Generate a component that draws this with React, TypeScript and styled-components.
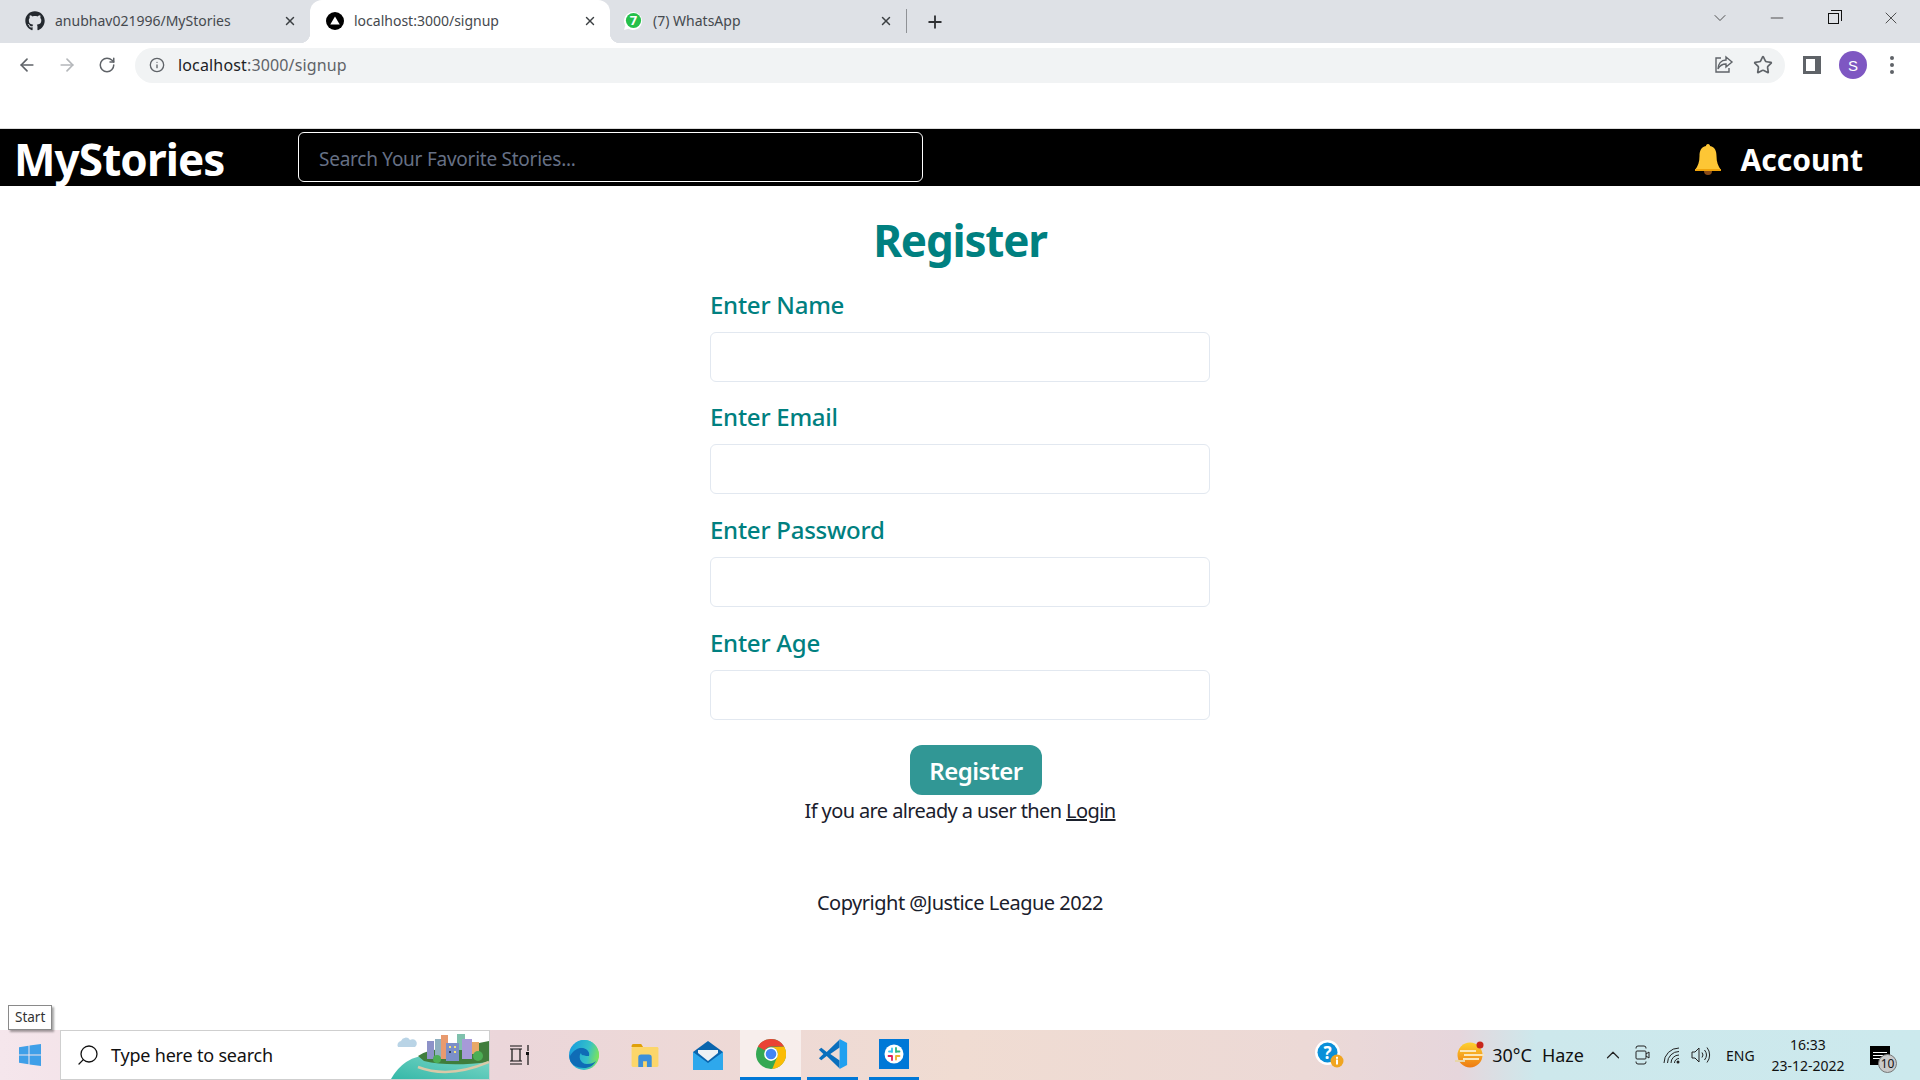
import React from "react";
import styled, { createGlobalStyle } from "styled-components";
import { ArrowLeft, ArrowRight, RotateCw, Info, Star, ChevronDown, ChevronUp, Minus, X, Plus, Search } from "lucide-react";
import { FaGithub } from "react-icons/fa";

const GlobalStyle = createGlobalStyle`
  * { box-sizing: border-box; }
  body {
    margin: 0;
    background: #fff;
    font-family: "Noto Sans", "Open Sans", sans-serif;
    color: #1a202c;
  }
`;

const Screen = styled.div`
  position: relative;
  display: flex;
  flex-direction: column;
  width: 1920px;
  height: 1080px;
  overflow: hidden;
`;

const TabStrip = styled.div`
  display: flex;
  align-items: stretch;
  height: 43px;
  padding-left: 12px;
  background: #dee1e6;
`;

const Tab = styled.div<{ $active?: boolean; $width: number }>`
  position: relative;
  display: flex;
  align-items: center;
  width: ${(p) => p.$width}px;
  padding: 0 13px 2px ${(p) => (p.$active ? 16 : 13)}px;
  font-size: 14px;
  color: #45494e;
  background: ${(p) => (p.$active ? "#fff" : "transparent")};
  border-radius: 12px 12px 0 0;
  ${(p) =>
    p.$active &&
    `
    &::before, &::after {
      content: "";
      position: absolute;
      bottom: 0;
      width: 10px;
      height: 10px;
    }
    &::before {
      left: -10px;
      background: radial-gradient(circle at 0 0, transparent 10px, #fff 10.5px);
    }
    &::after {
      right: -10px;
      background: radial-gradient(circle at 100% 0, transparent 10px, #fff 10.5px);
    }
  `}
`;

const TabTitle = styled.span`
  flex: 1;
  margin-left: 10px;
  white-space: nowrap;
`;

const TabDivider = styled.div`
  width: 1px;
  height: 24px;
  margin: 9px 18px 0 0;
  background: #8f9296;
`;

const NewTab = styled.div`
  display: flex;
  align-items: center;
  color: #2f3134;
`;

const WindowControls = styled.div`
  display: flex;
  align-items: flex-start;
  margin-left: auto;
  padding: 8px 1px 0 0;
  color: #333;
`;

const WindowButton = styled.div<{ $width: number }>`
  display: flex;
  justify-content: center;
  width: ${(p) => p.$width}px;
`;

const RestoreIcon = styled.div`
  position: relative;
  width: 11px;
  height: 11px;
  margin-top: 5px;
  border: 1px solid #111;
  &::after {
    content: "";
    position: absolute;
    top: -4px;
    left: 2px;
    width: 10px;
    height: 10px;
    border-top: 1px solid #111;
    border-right: 1px solid #111;
  }
`;

const Toolbar = styled.div`
  display: flex;
  align-items: center;
  height: 44px;
  padding: 0 14px 0 17px;
  background: #fff;
  color: #5f6368;
`;

const NavButton = styled.div<{ $muted?: boolean }>`
  display: flex;
  justify-content: center;
  width: 20px;
  margin-right: 20px;
  color: ${(p) => (p.$muted ? "#b4b7ba" : "#5f6368")};
`;

const AddressBar = styled.div`
  display: flex;
  align-items: center;
  width: 1650px;
  height: 35px;
  margin-left: -2px;
  padding: 0 10px 0 14px;
  border-radius: 18px;
  background: #f1f3f4;
  font-size: 16px;
  letter-spacing: 0.15px;
`;

const AddressHost = styled.span`
  margin-left: 13px;
  color: #202124;
`;

const AddressPath = styled.span`
  color: #5f6368;
`;

const AddressActions = styled.div`
  display: flex;
  align-items: center;
  gap: 19px;
  margin-left: auto;
  padding-right: 2px;
`;

const SidePanel = styled.div`
  width: 18px;
  height: 18px;
  margin-left: 18px;
  border: 3px solid #5f6368;
  border-right-width: 6px;
  background: #fff;
`;

const Avatar = styled.div`
  display: flex;
  align-items: center;
  justify-content: center;
  width: 28px;
  height: 28px;
  margin-left: 18px;
  border-radius: 50%;
  background: #7e57c2;
  color: #fff;
  font-size: 15px;
  font-family: "Liberation Sans", sans-serif;
`;

const Kebab = styled.div`
  display: flex;
  flex-direction: column;
  gap: 3px;
  margin-left: 23px;
  & > i {
    display: block;
    width: 4px;
    height: 4px;
    border-radius: 50%;
    background: #5f6368;
  }
`;

const Spacer = styled.div`
  height: 41px;
  background: #fff;
`;

const Navbar = styled.nav`
  display: flex;
  align-items: center;
  height: 58px;
  padding: 0 57px 0 14px;
  border-top: 1px solid #dcdcdc;
  background: #000;
  color: #fff;
  overflow: hidden;
`;

const Logo = styled.div`
  width: 284px;
  font-size: 44px;
  font-weight: 700;
  letter-spacing: -0.9px;
  line-height: 58px;
  margin-top: 3px;
`;

const SearchInput = styled.input`
  width: 625px;
  height: 50px;
  margin-top: -1px;
  padding: 3px 20px 0;
  border: 1px solid #fff;
  border-radius: 6px;
  background: #000;
  color: #fff;
  font: inherit;
  font-size: 19px;
  letter-spacing: -0.25px;
  outline: none;
  &::placeholder {
    color: #667085;
    opacity: 1;
  }
`;

const NavRight = styled.div`
  display: flex;
  align-items: center;
  gap: 19px;
  margin-left: auto;
  margin-top: 3px;
  font-size: 30px;
  font-weight: 700;
`;

const Main = styled.main`
  flex: 1;
  display: flex;
  flex-direction: column;
  align-items: center;
  padding-top: 26px;
`;

const Heading = styled.h1`
  margin: 0 0 20.6px;
  color: #008080;
  font-size: 44px;
  font-weight: 700;
  letter-spacing: -1.2px;
  line-height: 56px;
`;

const Form = styled.form`
  width: 500px;
`;

const Field = styled.div`
  margin-bottom: 19.6px;
`;

const Label = styled.label`
  display: block;
  margin-bottom: 11.07px;
  color: #008080;
  font-size: 24px;
  font-weight: 500;
  letter-spacing: -0.25px;
  line-height: 32px;
`;

const TextInput = styled.input`
  display: block;
  width: 100%;
  height: 50px;
  padding: 0 16px;
  border: 1px solid #e2e8f0;
  border-radius: 6px;
  background: #fff;
  outline: none;
`;

const ButtonRow = styled.div`
  display: flex;
  justify-content: center;
  margin: 25.4px 0 0 32px;
`;

const SubmitButton = styled.button`
  width: 132px;
  height: 50px;
  border: none;
  border-radius: 12px;
  background: #319795;
  color: #fff;
  font: inherit;
  font-size: 24px;
  font-weight: 600;
  letter-spacing: -0.5px;
  cursor: pointer;
`;

const Hint = styled.p`
  margin: 2px 0 0;
  font-size: 20px;
  letter-spacing: -0.6px;
  line-height: 28px;
  text-align: center;
  & a {
    color: inherit;
    text-decoration: underline;
  }
`;

const Copyright = styled.p`
  margin: 64px 0 0;
  font-size: 20px;
  letter-spacing: -0.5px;
  line-height: 28px;
  text-align: center;
`;

const Tooltip = styled.div`
  position: absolute;
  left: 8px;
  bottom: 50px;
  padding: 0 6px;
  height: 25px;
  line-height: 23px;
  border: 1px solid #8a8a8a;
  background: #fff;
  box-shadow: 2px 2px 2px rgba(0, 0, 0, 0.35);
  font-size: 13.5px;
  color: #333;
`;

const Taskbar = styled.footer`
  display: flex;
  align-items: center;
  height: 50px;
  background: linear-gradient(90deg, #f5e6ec 0%, #ebd6da 26%, #f0dcd2 50%, #ecd9d6 68%, #e6d6dc 76%, #cde8ec 80%, #cce9ed 100%);
  color: #111;
`;

const StartButton = styled.div`
  display: flex;
  align-items: center;
  justify-content: center;
  width: 60px;
  height: 50px;
`;

const SearchBox = styled.div`
  position: relative;
  display: flex;
  align-items: center;
  width: 430px;
  height: 50px;
  padding-left: 15px;
  border: 1px solid #cfcfcf;
  background: #fff;
  font-size: 18px;
  overflow: hidden;
`;

const SearchText = styled.span`
  margin-left: 11px;
  letter-spacing: -0.2px;
`;

const SearchArt = styled.svg`
  position: absolute;
  right: 0;
  bottom: 0;
`;

const MirroredSearch = styled(Search)`
  transform: scaleX(-1);
`;

const AppSlot = styled.div<{ $width: number; $gap?: number; $running?: boolean; $focused?: boolean }>`
  position: relative;
  display: flex;
  align-items: center;
  justify-content: center;
  width: ${(p) => p.$width}px;
  height: 50px;
  margin-left: ${(p) => p.$gap ?? 0}px;
  background: ${(p) => (p.$focused ? "rgba(255,255,255,0.55)" : "transparent")};
  ${(p) => p.$running && "border-bottom: 3px solid #0078d7;"}
`;

const Tray = styled.div`
  display: flex;
  align-items: center;
  margin-left: auto;
  padding-right: 20px;
`;

const HelpSlot = styled.div`
  display: flex;
  margin-right: 110px;
`;

const WeatherText = styled.span`
  display: flex;
  gap: 10px;
  margin: 0 14px 0 5px;
  font-size: 18px;
`;

const TrayIcon = styled.div`
  display: flex;
  justify-content: center;
  width: 29.5px;
  color: #222;
`;

const Lang = styled.span`
  margin-left: 10px;
  width: 30px;
  font-size: 14px;
`;

const Clock = styled.div`
  width: 104px;
  font-size: 14px;
  line-height: 21px;
  text-align: center;
`;

const NotifySlot = styled.div`
  position: relative;
  display: flex;
  justify-content: flex-start;
  width: 40px;
  padding-left: 10px;
`;

const NotifyBox = styled.div`
  display: flex;
  flex-direction: column;
  justify-content: center;
  gap: 2px;
  width: 20px;
  height: 19px;
  padding: 0 3px;
  background: #000;
  & > i {
    display: block;
    height: 1px;
    background: #fff;
  }
`;

const NotifyBadge = styled.div`
  position: absolute;
  left: 18px;
  top: 8px;
  width: 19px;
  height: 19px;
  border: 1px solid #777;
  border-radius: 50%;
  background: #c9c9c9;
  font-size: 12px;
  line-height: 17px;
  text-align: center;
`;

const Nextjs = () => (
  <svg width="18" height="18" viewBox="0 0 16 16">
    <circle cx="8" cy="8" r="8" fill="#000" />
    <path d="M8 4l4.2 7H3.8z" fill="#fff" />
  </svg>
);

const Whatsapp = () => (
  <svg width="20" height="20" viewBox="0 0 20 20">
    <path d="M10 1a9 9 0 0 0-7.7 13.6L1 19l4.5-1.2A9 9 0 1 0 10 1z" fill="#fff" />
    <circle cx="10.5" cy="9.5" r="7.6" fill="#25c04a" />
    <text x="10.5" y="14" fontSize="13" fontWeight="700" textAnchor="middle" fill="#fff" fontFamily="Noto Sans">7</text>
  </svg>
);

const ShareIcon = () => (
  <svg width="20" height="20" viewBox="0 0 20 20" fill="none" stroke="#5f6368" strokeWidth="1.4">
    <path d="M7 3H2v14h13v-4" />
    <path d="M12 2l6 5-6 5V9c-4 0-6 1-8 5 0-5 3-9 8-9z" />
  </svg>
);

const Bell = () => (
  <svg width="28" height="32" viewBox="0 0 28 32">
    <circle cx="14" cy="28" r="4" fill="#8a4b16" />
    <path d="M14 1c1.4 0 2 1 2 2 5 1 6.5 5 6.5 10 0 6 1.5 10 4.5 14H1c3-4 4.500-8 4.500-14 0-5 1.500-9 6.500-10 0-1 .6-2 2-2z" fill="#fdc635" />
    <rect x="1" y="26" width="26" height="2" fill="#f0a30a" />
  </svg>
);

const WindowsLogo = () => (
  <svg width="22" height="22" viewBox="0 0 22 22" fill="#3f9fe8">
    <path d="M0 3.200l9.500-1.400v8.700H0zM10.500 1.600L22 0v10.500H10.500zM0 11.500h9.500v8.700L0 18.800zM10.500 11.500H22V22l-11.500-1.600z" />
  </svg>
);

const CityArt = () => (
  <SearchArt width="110" height="50" viewBox="0 0 110 50">
    <defs>
      <linearGradient id="sea" x1="0" y1="1" x2="1" y2="0">
        <stop offset="0" stopColor="#35b8a8" />
        <stop offset="1" stopColor="#7fd8c8" />
      </linearGradient>
    </defs>
    <path d="M12 50Q25 27 50 26L110 28V50z" fill="url(#sea)" />
    <path d="M39 27Q50 19 70 20L110 12V33Q70 38 45 32z" fill="#3f7d3c" />
    <rect x="48" y="12" width="7" height="18" fill="#8d92c8" />
    <rect x="56" y="10" width="8" height="20" fill="#8fb0c0" />
    <rect x="62" y="6" width="7" height="24" fill="#e89a6e" />
    <rect x="78" y="5" width="8" height="16" fill="#7fc1ad" />
    <rect x="67" y="14" width="13" height="18" fill="#7b8fc8" />
    <rect x="70" y="17" width="2" height="2" fill="#f5e27a" />
    <rect x="75" y="17" width="2" height="2" fill="#f5e27a" />
    <rect x="70" y="22" width="2" height="2" fill="#33405e" />
    <rect x="75" y="22" width="2" height="2" fill="#f5e27a" />
    <rect x="83" y="10" width="10" height="20" fill="#a69ad8" />
    <rect x="93" y="13" width="7" height="12" fill="#e8a868" />
    <circle cx="58" cy="30" r="4" fill="#4cae55" />
    <circle cx="99" cy="27" r="5" fill="#4cae55" />
    <path d="M39 38Q70 50 110 33" fill="none" stroke="#d8c9a8" strokeWidth="2.500" />
    <path d="M19 18a4 4 0 0 1 3-6 5 5 0 0 1 9-1 4 4 0 0 1 5 7z" fill="#b9d4e6" />
  </SearchArt>
);

const TaskView = () => (
  <svg width="22" height="20" viewBox="0 0 22 20" fill="none" stroke="#111" strokeWidth="1.200">
    <path d="M1 1h12M1 19h12M1 4h12M1 16h12M3 4v12M11 4v12M19 0v6M19 10v10" />
    <rect x="17" y="7" width="3" height="3" fill="#111" stroke="none" />
  </svg>
);

const EdgeIcon = () => (
  <svg width="30" height="30" viewBox="0 0 30 30">
    <defs>
      <linearGradient id="edgeTop" x1="0" y1="0.500" x2="1" y2="0.700">
        <stop offset="0" stopColor="#1a9fdc" />
        <stop offset="0.600" stopColor="#35c1c8" />
        <stop offset="1" stopColor="#7ce35c" />
      </linearGradient>
    </defs>
    <circle cx="15" cy="15" r="15" fill="url(#edgeTop)" />
    <path d="M0.500 17C1 10 8 7 14 8c5 1 7 5 6 8-3 0-8 0-8-3-3 3-1 11 6 11 4 0 7-1 9-3-3 5-7 7-12 7C7 28 0.500 24 0.500 17z" fill="#0f6cb6" />
    <path d="M30 16c0 2-2 4-6 4-3 0-5-1-4-4 2-1 0-7-5-8-4-1-10 1-14 8C1 7 8 0 15 0c9 0 15 7 15 16z" fill="url(#edgeTop)" />
  </svg>
);

const FolderIcon = () => (
  <svg width="28" height="23" viewBox="0 0 28 24">
    <path d="M0 2a2 2 0 0 1 2-2h8l2 3H0z" fill="#e0a008" />
    <rect x="0" y="3" width="28" height="21" rx="1.500" fill="#fcd66a" />
    <path d="M7 24V14a3 3 0 0 1 3-3h8a3 3 0 0 1 3 3v10h-5v-6h-4v6z" fill="#3d8fd9" />
  </svg>
);

const MailIcon = () => (
  <svg width="30" height="29" viewBox="0 0 30 29">
    <path d="M0 11L15 0l15 11v18H0z" fill="#0a64ad" />
    <path d="M5 9h20v3l-10 8-10-8z" fill="#eef1f4" />
    <path d="M0 11l15 11 15-11v18H0z" fill="#2ea8ec" />
  </svg>
);

const ChromeIcon = () => (
  <svg width="30" height="30" viewBox="0 0 48 48">
    <circle cx="24" cy="24" r="24" fill="#34a853" />
    <path d="M45 12A24 24 0 0 1 26 48L33.500 29.500A11 11 0 0 0 24 13z" fill="#fbbc05" />
    <path d="M24 0A24 24 0 0 1 45 12H24A11 11 0 0 0 14.500 18.500L3 12A24 24 0 0 1 24 0z" fill="#ea4335" />
    <circle cx="24" cy="24" r="11" fill="#fff" />
    <circle cx="24" cy="24" r="8.500" fill="#4285f4" />
  </svg>
);

const VsCodeIcon = () => (
  <svg width="30" height="30" viewBox="0 0 100 100">
    <path d="M3 36L11 29 29 43 72 2V28L41 50 72 72V98L29 57 11 71 3 64 18 50z" fill="#0a6fbd" />
    <path d="M72 0L97 13V87L72 100z" fill="#20a0f0" />
  </svg>
);

const SlackIcon = () => (
  <svg width="30" height="30" viewBox="0 0 30 30">
    <rect width="30" height="30" fill="#0078d7" />
    <circle cx="15" cy="15" r="9.500" fill="#fff" />
    <path d="M13 9.500v3.500M10 12.500h3" stroke="#36c5f0" strokeWidth="1.800" strokeLinecap="round" />
    <path d="M17 9v4M17 12.500h3.500" stroke="#2eb67d" strokeWidth="1.800" strokeLinecap="round" />
    <path d="M13 17v4M9.500 17h3.500" stroke="#e01e5a" strokeWidth="1.800" strokeLinecap="round" />
    <path d="M17 17v3.500M17 17h3.500" stroke="#ecb22e" strokeWidth="1.800" strokeLinecap="round" />
  </svg>
);

const HelpIcon = () => (
  <svg width="30" height="30" viewBox="0 0 30 30">
    <circle cx="12.500" cy="12.500" r="12.500" fill="#fff" />
    <circle cx="12.500" cy="12.500" r="10" fill="#0a8fd8" />
    <text x="12.500" y="18.500" fontSize="17" fontWeight="700" textAnchor="middle" fill="#fff" fontFamily="Noto Sans">?</text>
    <circle cx="22" cy="21" r="6.500" fill="#f0a520" />
    <rect x="21" y="19.500" width="2" height="5" fill="#fff" />
    <rect x="21" y="16.800" width="2" height="2" fill="#fff" />
  </svg>
);

const WeatherIcon = () => (
  <svg width="32" height="28" viewBox="0 0 32 28">
    <defs>
      <linearGradient id="sun" x1="0" y1="0" x2="0" y2="1">
        <stop offset="0" stopColor="#fdd02f" />
        <stop offset="1" stopColor="#ee7a12" />
      </linearGradient>
    </defs>
    <circle cx="15" cy="14" r="12.500" fill="url(#sun)" />
    <path d="M5 10h16M9 14h20M8 18h16" stroke="#fbe6b8" strokeWidth="2" />
    <path d="M0 20h10" stroke="#e8d6a8" strokeWidth="2" />
    <circle cx="25" cy="4" r="3.500" fill="#c8261c" />
  </svg>
);

const MeetIcon = () => (
  <svg width="15" height="20" viewBox="0 0 15 20" fill="none" stroke="#222" strokeWidth="1">
    <path d="M1 3.500V3a2 2 0 0 1 2-2h6a2 2 0 0 1 2 2v.5M1 16.500v.5a2 2 0 0 0 2 2h6a2 2 0 0 0 2-2v-.5" />
    <rect x="1" y="6" width="10" height="8" rx="1" />
    <path d="M11 9l3-2v6l-3-2" />
  </svg>
);

const WifiIcon = () => (
  <svg width="17" height="17" viewBox="0 0 17 17" fill="none" stroke="#222" strokeWidth="1">
    <path d="M1 16A15 15 0 0 1 16 1" />
    <path d="M4.500 16A11.500 11.500 0 0 1 16 4.500" />
    <path d="M8 16A8 8 0 0 1 16 8" />
    <path d="M11.500 16A4.500 4.500 0 0 1 16 11.500" />
    <circle cx="15" cy="15" r="1.500" fill="#222" stroke="none" />
  </svg>
);

const VolumeIcon = () => (
  <svg width="20" height="18" viewBox="0 0 20 18" fill="none" stroke="#222" strokeWidth="1">
    <path d="M1 6h3l4-4v14l-4-4H1z" />
    <path d="M11 6.500a4 4 0 0 1 0 5M13.500 4a8 8 0 0 1 0 10M16 1.500a12 12 0 0 1 0 15" />
  </svg>
);

const Tabs = [
  { width: 298, title: "anubhav021996/MyStories", icon: <FaGithub size={20} color="#24292f" /> },
  { width: 300, title: "localhost:3000/signup", icon: <Nextjs />, active: true },
  { width: 296, title: "(7) WhatsApp", icon: <Whatsapp /> },
];

const Fields = ["Enter Name", "Enter Email", "Enter Password", "Enter Age"];

const App: React.FC = () => {
  return (
    <Screen>
      <GlobalStyle />
      <TabStrip>
        {Tabs.map((tab) => (
          <Tab key={tab.title} $width={tab.width} $active={tab.active}>
            {tab.icon}
            <TabTitle>{tab.title}</TabTitle>
            <X size={14} strokeWidth={2.5} color="#3c4043" />
          </Tab>
        ))}
        <TabDivider />
        <NewTab>
          <Plus size={20} strokeWidth={2.2} />
        </NewTab>
        <WindowControls>
          <WindowButton $width={57}>
            <ChevronDown size={20} strokeWidth={1} />
          </WindowButton>
          <WindowButton $width={57}>
            <Minus size={20} strokeWidth={1} />
          </WindowButton>
          <WindowButton $width={57}>
            <RestoreIcon />
          </WindowButton>
          <WindowButton $width={57}>
            <X size={20} strokeWidth={1} />
          </WindowButton>
        </WindowControls>
      </TabStrip>
      <Toolbar>
        <NavButton>
          <ArrowLeft size={20} />
        </NavButton>
        <NavButton $muted>
          <ArrowRight size={20} />
        </NavButton>
        <NavButton>
          <RotateCw size={18} />
        </NavButton>
        <AddressBar>
          <Info size={16} />
          <AddressHost>localhost</AddressHost>
          <AddressPath>:3000/signup</AddressPath>
          <AddressActions>
            <ShareIcon />
            <Star size={20} strokeWidth={2} />
          </AddressActions>
        </AddressBar>
        <SidePanel />
        <Avatar>S</Avatar>
        <Kebab>
          <i />
          <i />
          <i />
        </Kebab>
      </Toolbar>
      <Spacer />
      <Navbar>
        <Logo>MyStories</Logo>
        <SearchInput placeholder="Search Your Favorite Stories..." />
        <NavRight>
          <Bell />
          Account
        </NavRight>
      </Navbar>
      <Main>
        <Heading>Register</Heading>
        <Form>
          {Fields.map((label) => (
            <Field key={label}>
              <Label>{label}</Label>
              <TextInput />
            </Field>
          ))}
          <ButtonRow>
            <SubmitButton type="button">Register</SubmitButton>
          </ButtonRow>
          <Hint>
            If you are already a user then <a href="#login">Login</a>
          </Hint>
          <Copyright>Copyright @Justice League 2022</Copyright>
        </Form>
      </Main>
      <Tooltip>Start</Tooltip>
      <Taskbar>
        <StartButton>
          <WindowsLogo />
        </StartButton>
        <SearchBox>
          <MirroredSearch size={24} strokeWidth={1.3} />
          <SearchText>Type here to search</SearchText>
          <CityArt />
        </SearchBox>
        <AppSlot $width={60}>
          <TaskView />
        </AppSlot>
        <AppSlot $width={67}>
          <EdgeIcon />
        </AppSlot>
        <AppSlot $width={56}>
          <FolderIcon />
        </AppSlot>
        <AppSlot $width={70}>
          <MailIcon />
        </AppSlot>
        <AppSlot $width={61} $running $focused $gap={-3}>
          <ChromeIcon />
        </AppSlot>
        <AppSlot $width={51} $running $gap={6}>
          <VsCodeIcon />
        </AppSlot>
        <AppSlot $width={50} $running $gap={11}>
          <SlackIcon />
        </AppSlot>
        <Tray>
          <HelpSlot>
            <HelpIcon />
          </HelpSlot>
          <WeatherIcon />
          <WeatherText>
            <span>30°C</span>
            <span>Haze</span>
          </WeatherText>
          <TrayIcon>
            <ChevronUp size={22} strokeWidth={1.3} />
          </TrayIcon>
          <TrayIcon>
            <MeetIcon />
          </TrayIcon>
          <TrayIcon>
            <WifiIcon />
          </TrayIcon>
          <TrayIcon>
            <VolumeIcon />
          </TrayIcon>
          <Lang>ENG</Lang>
          <Clock>
            <div>16:33</div>
            <div>23-12-2022</div>
          </Clock>
          <NotifySlot>
            <NotifyBox>
              <i />
              <i />
              <i />
            </NotifyBox>
            <NotifyBadge>10</NotifyBadge>
          </NotifySlot>
        </Tray>
      </Taskbar>
    </Screen>
  );
};

export default App;
